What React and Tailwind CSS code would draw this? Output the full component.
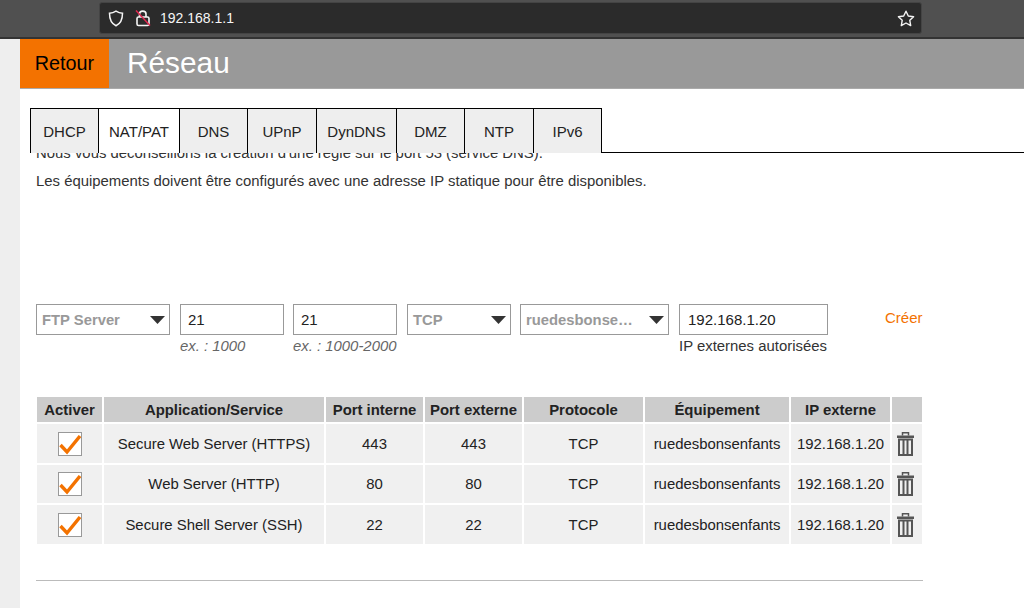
const Tab = ({ label, width, active }) => (
  <div
    className={`flex h-[45px] items-center justify-center border-t border-r border-black pt-[2px] ${width} ${active ? "bg-white" : "bg-[#eeeeee]"} text-[15px] text-[#222222]`}
  >
    {label}
  </div>
);

const Caret = () => (
  <svg width="15" height="8" viewBox="0 0 15 8" className="mr-[3px] shrink-0">
    <path d="M0 0H15L7.5 8Z" fill="#333333" />
  </svg>
);

const FakeSelect = ({ label, width }) => (
  <div className={`flex h-[31px] items-center justify-between border border-[#999999] bg-white pl-[5px] pr-[1px] ${width}`}>
    <span className="pt-[1px] text-[14.8px] font-bold text-[#999999]">{label}</span>
    <Caret />
  </div>
);

const Field = ({ value, width, hint, hintClass, pad }) => (
  <div className={`flex flex-col ${width}`}>
    <input
      readOnly
      value={value}
      className={`h-[31px] w-full border border-[#999999] bg-white text-[15px] text-[#222222] outline-none ${pad}`}
    />
    {hint ? <span className={`mt-[2px] whitespace-nowrap text-[14.9px] leading-[18px] ${hintClass}`}>{hint}</span> : null}
  </div>
);

const Check = () => (
  <div className="flex h-[24px] w-[24px] items-center justify-center border border-[#999999] bg-white">
    <svg width="22" height="22" viewBox="0 0 22 22" fill="none">
      <path d="M1.5 12L8 19L21 3" stroke="#f37200" strokeWidth="3.4" />
    </svg>
  </div>
);

const Trash = () => (
  <svg width="17" height="24" viewBox="0 0 17 24" fill="none" className="ml-[5px]">
    <path d="M5.5 3.5V0.8H11.5V3.5" stroke="#555555" strokeWidth="1.5" />
    <rect x="0" y="3.5" width="17" height="2.5" fill="#555555" />
    <path d="M2 7.5H15V23H2Z" stroke="#555555" strokeWidth="2" />
    <path d="M6.5 8V22M10.5 8V22" stroke="#555555" strokeWidth="2" />
  </svg>
);

const rows = [
  ["Secure Web Server (HTTPS)", "443", "443", "h-[39px]", "pt-[1px]"],
  ["Web Server (HTTP)", "80", "80", "h-[38px]", ""],
  ["Secure Shell Server (SSH)", "22", "22", "h-[39px]", "pt-[1px]"],
];

const headers = [
  ["Activer", "w-[65px]"],
  ["Application/Service", "w-[220px]"],
  ["Port interne", "w-[97px]"],
  ["Port externe", "w-[97px]"],
  ["Protocole", "w-[119px]"],
  ["Équipement", "w-[144px]"],
  ["IP externe", "w-[99px]"],
  ["", "w-[30px]"],
];

export default function App() {
  return (
    <div className="flex h-[608px] w-[1024px] flex-col overflow-hidden bg-white font-['Liberation_Sans',Arial,sans-serif]">
      <div className="flex h-[39px] shrink-0 items-start border-b-2 border-[#333333] bg-[#505050] pl-[99px] pt-[2px]">
        <div className="flex h-[32px] w-[823px] items-center rounded-[3px] border border-[#444444] bg-[#2b2b2b] pl-[8px] pr-[6px] text-[#f5f5f5]">
          <svg width="16" height="17" viewBox="0 0 16 17" fill="none" stroke="#f5f5f5" strokeWidth="1.5">
            <path d="M8 1.2C5.8 2.6 3.6 3.2 1.5 3.3C1.5 9 3 13.5 8 15.8C13 13.5 14.5 9 14.5 3.3C12.4 3.2 10.2 2.6 8 1.2Z" />
          </svg>
          <svg width="16" height="18" viewBox="0 0 16 18" fill="none" className="ml-[11px]">
            <path d="M4.5 8V5C4.5 1.2 11 1.2 11 5V8" stroke="#f5f5f5" strokeWidth="1.6" />
            <rect x="2" y="8" width="12" height="8.5" rx="1.5" stroke="#f5f5f5" strokeWidth="1.6" />
            <path d="M1 1.5L15 16.5" stroke="#e22850" strokeWidth="1.5" />
          </svg>
          <span className="ml-[9px] text-[14px]">192.168.1.1</span>
          <svg width="18" height="17" viewBox="0 0 18 17" fill="none" stroke="#f5f5f5" strokeWidth="1.4" strokeLinejoin="round" className="ml-auto">
            <path d="M9 1.2L11.3 6L16.6 6.7L12.8 10.3L13.7 15.6L9 13L4.3 15.6L5.2 10.3L1.4 6.7L6.7 6Z" />
          </svg>
        </div>
      </div>
      <div className="flex min-h-0 flex-1">
        <div className="w-[20px] shrink-0 bg-[#eeeeee]" />
        <div className="flex min-w-0 flex-1 flex-col">
          <div className="flex h-[50px] shrink-0 border-b border-[#aaaaaa] bg-[#999999]">
            <div className="flex w-[89px] items-center justify-center bg-[#f37200] text-[19.8px] text-black">Retour</div>
            <div className="flex items-center pl-[18px] text-[29.8px] text-white">Réseau</div>
          </div>
          <div className="flex h-[64px] shrink-0 items-end pl-[10px] pt-[19px]">
            <div className="flex h-[45px] w-full border-b border-black">
              <div className="flex h-[45px] border-l border-black">
                <Tab label="DHCP" width="w-[68px]" />
                <Tab label="NAT/PAT" width="w-[81px]" active />
                <Tab label="DNS" width="w-[68px]" />
                <Tab label="UPnP" width="w-[69px]" />
                <Tab label="DynDNS" width="w-[80px]" />
                <Tab label="DMZ" width="w-[68px]" />
                <Tab label="NTP" width="w-[69px]" />
                <Tab label="IPv6" width="w-[68px]" />
              </div>
            </div>
          </div>
          <div className="flex min-h-0 flex-1 flex-col overflow-hidden pl-[16px] text-[14.9px] text-[#333333]">
            <p className="-mt-[9px] h-[18px] leading-[18px]">Nous vous déconseillons la création d'une règle sur le port 53 (service DNS).</p>
            <p className="mt-[10px] h-[18px] leading-[18px]">Les équipements doivent être configurés avec une adresse IP statique pour être disponibles.</p>
            <div className="mt-[114px] flex h-[60px] shrink-0 items-start">
              <FakeSelect label="FTP Server" width="w-[134px]" />
              <Field value="21" width="ml-[10px] w-[104px]" pad="pl-[7px]" hint="ex. : 1000" hintClass="italic text-[#666666]" />
              <Field value="21" width="ml-[9px] w-[104px]" pad="pl-[7px]" hint="ex. : 1000-2000" hintClass="italic text-[#666666]" />
              <div className="ml-[10px]"><FakeSelect label="TCP" width="w-[104px]" /></div>
              <div className="ml-[9px]"><FakeSelect label="ruedesbonse…" width="w-[149px]" /></div>
              <Field value="192.168.1.20" width="ml-[10px] w-[149px]" pad="pl-[8px]" hint="IP externes autorisées" hintClass="text-[#333333]" />
              <span className="ml-[57px] mt-[3px] text-[15px] text-[#f37200]">Créer</span>
            </div>
            <table className="-ml-[1px] mt-[31px] w-[889px] table-fixed border-separate border-spacing-[2px] text-[14.9px] text-[#222222]">
              <thead>
                <tr>
                  {headers.map(([h, w], i) => (
                    <th key={i} className={`h-[25px] bg-[#cccccc] p-0 pt-[1px] text-center font-bold ${w}`}>{h}</th>
                  ))}
                </tr>
              </thead>
              <tbody>
                {rows.map(([name, a, b, h, pt]) => (
                  <tr key={name} className={h}>
                    <td className="bg-[#f0f0f0] p-0"><div className="flex justify-center"><Check /></div></td>
                    <td className={`bg-[#f0f0f0] p-0 text-center ${pt}`}>{name}</td>
                    <td className={`bg-[#f0f0f0] p-0 text-center ${pt}`}>{a}</td>
                    <td className={`bg-[#f0f0f0] p-0 text-center ${pt}`}>{b}</td>
                    <td className={`bg-[#f0f0f0] p-0 text-center ${pt}`}>TCP</td>
                    <td className={`bg-[#f0f0f0] p-0 text-center ${pt}`}>ruedesbonsenfants</td>
                    <td className={`bg-[#f0f0f0] p-0 text-center ${pt}`}>192.168.1.20</td>
                    <td className="bg-[#f0f0f0] p-0"><Trash /></td>
                  </tr>
                ))}
              </tbody>
            </table>
            <div className="mt-[34px] h-[1px] w-[887px] shrink-0 bg-[#bbbbbb]" />
          </div>
        </div>
      </div>
    </div>
  );
}
